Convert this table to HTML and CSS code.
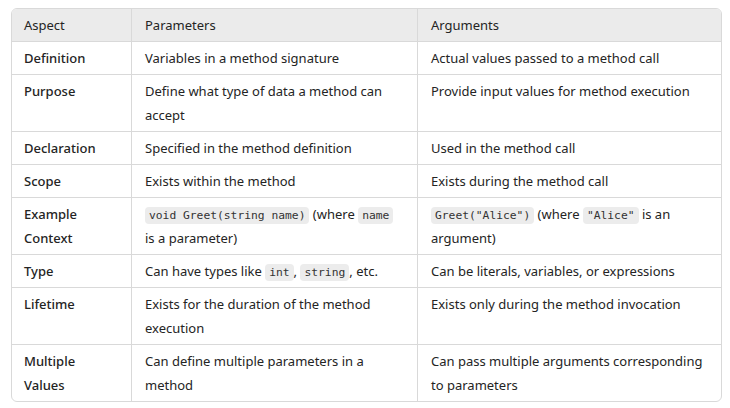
FILE: index.html
```html
<!DOCTYPE html>
<html>
<head>
<meta charset="utf-8">
<link rel="stylesheet" href="styles.css">
</head>
<body>
<div class="wrap">
<table class="cmp">
  <colgroup><col class="c1"><col class="c2"><col class="c3"></colgroup>
  <thead>
    <tr><th>Aspect</th><th>Parameters</th><th>Arguments</th></tr>
  </thead>
  <tbody>
    <tr><td>Definition</td><td>Variables in a method signature</td><td>Actual values passed to a method call</td></tr>
    <tr><td>Purpose</td><td>Define what type of data a method can accept</td><td>Provide input values for method execution</td></tr>
    <tr><td>Declaration</td><td>Specified in the method definition</td><td>Used in the method call</td></tr>
    <tr><td>Scope</td><td>Exists within the method</td><td>Exists during the method call</td></tr>
    <tr><td>Example Context</td><td><code>void Greet(string name)</code> (where <code>name</code> is a parameter)</td><td><code>Greet("Alice")</code> (where <code>"Alice"</code> is an argument)</td></tr>
    <tr><td>Type</td><td>Can have types like <code>int</code>, <code>string</code>, etc.</td><td>Can be literals, variables, or expressions</td></tr>
    <tr><td>Lifetime</td><td>Exists for the duration of the method execution</td><td>Exists only during the method invocation</td></tr>
    <tr><td>Multiple Values</td><td>Can define multiple parameters in a method</td><td>Can pass multiple arguments corresponding to parameters</td></tr>
  </tbody>
</table>
</div>
</body>
</html>
```
FILE: styles.css
```css
html, body { margin: 0; padding: 0; background: #ffffff; }
body {
  padding: 8px 8px 0 11px;
  font-family: "Noto Sans", "Open Sans", sans-serif;
  font-size: 13px;
  color: #242424;
}
.wrap {
  width: 709px;
  border: 1px solid #d9d9d9;
  border-radius: 6px;
  overflow: hidden;
}
.cmp {
  width: 100%;
  border-collapse: separate;
  border-spacing: 0;
  table-layout: fixed;
}
.c1 { width: 120px; }
.c2 { width: 286px; }
.cmp th, .cmp td {
  text-align: left;
  vertical-align: top;
  padding: 4px 12px 4px 12px;
  line-height: 24px;
  border-bottom: 1px solid #d9d9d9;
  border-right: 1px solid #d9d9d9;
}
.cmp th:last-child, .cmp td:last-child { border-right: none; }
.cmp tbody tr:last-child td { border-bottom: none; }
.cmp th {
  background: #ebebeb;
  font-weight: 400;
}
.cmp td:first-child { font-weight: 500; }
.cmp td + td, .cmp th + th { padding-left: 13px; }
code {
  font-family: "DejaVu Sans Mono", monospace;
  font-size: 11.3px;
  line-height: 1;
  background: #ececec;
  border-radius: 4px;
  padding: 2px 4px;
  color: #333;
}
```
